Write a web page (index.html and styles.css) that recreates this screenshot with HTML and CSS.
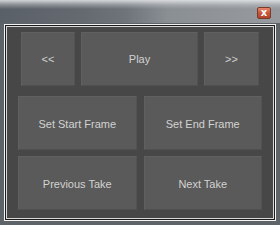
FILE: index.html
```html
<!DOCTYPE html>
<html>
<head>
<meta charset="utf-8">
<link rel="stylesheet" href="styles.css">
</head>
<body>
<div class="window">
  <div class="titlebar">
    <div class="close">x</div>
  </div>
  <div class="frame">
    <div class="inner">
      <div class="panel">
        <div class="row1">
          <div class="btn">&lt;&lt;</div>
          <div class="btn">Play</div>
          <div class="btn">&gt;&gt;</div>
        </div>
        <div class="row2">
          <div class="btn">Set Start Frame</div>
          <div class="btn">Set End Frame</div>
          <div class="btn">Previous Take</div>
          <div class="btn">Next Take</div>
        </div>
      </div>
    </div>
  </div>
</div>
</body>
</html>
```
FILE: styles.css
```css
html, body {
  margin: 0;
  padding: 0;
  width: 280px;
  height: 225px;
  overflow: hidden;
}
.window {
  width: 280px;
  height: 225px;
  background: #5e6368;
  display: flex;
  flex-direction: column;
  font-family: "Liberation Sans", sans-serif;
}
.titlebar {
  height: 23px;
  flex: none;
  position: relative;
  background:
    linear-gradient(to bottom, rgba(230,232,234,0.85) 0px, rgba(200,203,206,0.4) 5px, rgba(0,0,0,0) 9px),
    linear-gradient(to right, #5a6067 0%, #646a70 30%, #6e747a 45%, #8a8f94 60%, #979b9f 100%);
}
.close {
  position: absolute;
  left: 257px;
  top: 7px;
  width: 14px;
  height: 12px;
  box-sizing: border-box;
  border: 1px solid #7a3a2a;
  border-radius: 2px;
  background: linear-gradient(to bottom, #e6876c 0%, #c9553a 50%, #b34429 100%);
  color: #ffffff;
  font: bold 10px/9px "DejaVu Sans", sans-serif;
  text-align: center;
}
.frame {
  margin: 1px 4px 4px 4px;
  flex: 1;
  border: 1px solid #f2f2f2;
  background: #1c1c1c;
  padding: 1px;
  display: flex;
}
.inner {
  flex: 1;
  border: 1px solid #d8d8d8;
  display: flex;
}
.panel {
  flex: 1;
  background: #474747;
  padding: 5px 11px 5px 11px;
  display: flex;
  flex-direction: column;
}
.row1 {
  display: grid;
  grid-template-columns: 54px 1fr 55px;
  gap: 6px;
  height: 54px;
  margin: 0 3px 10px 3px;
}
.row2 {
  display: grid;
  grid-template-columns: 1fr 1fr;
  grid-template-rows: 54px 54px;
  column-gap: 7px;
  row-gap: 6px;
}
.btn {
  background: #5a5a5a;
  border-top: 1px solid #606060;
  border-left: 1px solid #606060;
  border-right: 1px solid #525252;
  border-bottom: 1px solid #505050;
  color: #d2d2d2;
  font-size: 11px;
  display: flex;
  align-items: center;
  justify-content: center;
}
.row2 .btn {
  padding-top: 2px;
  box-sizing: border-box;
}
```
